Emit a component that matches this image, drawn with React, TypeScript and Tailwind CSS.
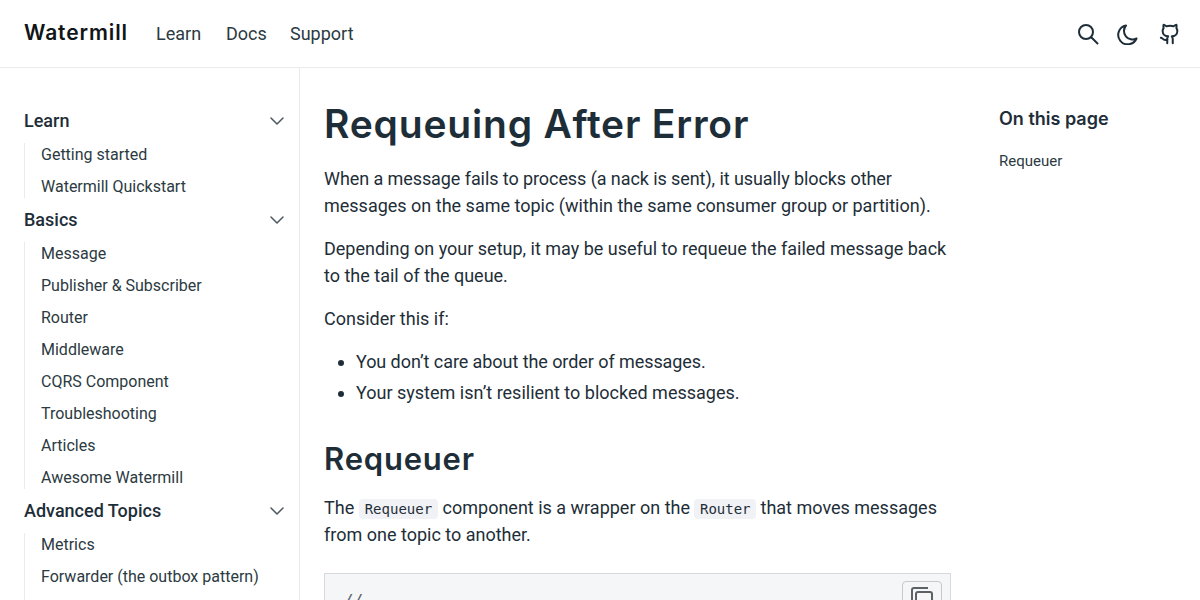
const groups = [
  { title: "Learn", items: ["Getting started", "Watermill Quickstart"] },
  { title: "Basics", items: ["Message", "Publisher & Subscriber", "Router", "Middleware", "CQRS Component", "Troubleshooting", "Articles", "Awesome Watermill"] },
  { title: "Advanced Topics", items: ["Metrics", "Forwarder (the outbox pattern)", ""] },
];

function Chevron() {
  return (
    <svg width="14" height="14" viewBox="0 0 14 14" fill="none" stroke="#4a5860" strokeWidth="1.5" strokeLinecap="round" strokeLinejoin="round">
      <path d="M1 5 7 11 13 5" />
    </svg>
  );
}

export default function App() {
  return (
    <div className="h-screen overflow-hidden bg-white font-['Roboto',sans-serif] text-[#1e2e38]">
      <header className="flex h-[68px] items-center justify-between border-b border-[#e9ebed] pb-px pl-6 pr-[19px]">
        <div className="flex items-center">
          <span className="w-[132px] font-['Inter',sans-serif] text-[21px] font-semibold tracking-[0.9px] text-[#101518]">Watermill</span>
          <nav className="flex gap-6 text-[18px] text-[#2c3a42]">
            <span className="w-[46px]">Learn</span>
            <span className="w-[40px]">Docs</span>
            <span>Support</span>
          </nav>
        </div>
        <div className="flex items-center text-[#1e2e38]">
          <svg width="24" height="24" viewBox="0 0 24 24" fill="none" stroke="currentColor" strokeWidth="2" strokeLinecap="round" strokeLinejoin="round">
            <circle cx="10" cy="11" r="7" />
            <path d="m15.500 16.500 6 6" />
          </svg>
          <svg className="ml-[15px]" width="24" height="24" viewBox="0 0 24 24" fill="none" stroke="currentColor" strokeWidth="2" strokeLinecap="round" strokeLinejoin="round">
            <path d="M11 4.500a9.500 9.500 0 1 0 10.500 13 8.500 8.500 0 0 1-10.500-13Z" />
          </svg>
          <svg className="ml-[20px] mt-[2px]" width="22" height="22" viewBox="0 0 24 24" fill="none" stroke="currentColor" strokeWidth="2.200" strokeLinecap="round" strokeLinejoin="round">
            <path d="M15 22v-4a4.800 4.800 0 0 0-1-3.500c3 0 6-2 6-5.500.08-1.250-.27-2.480-1-3.500.28-1.150.28-2.350 0-3.500 0 0-1 0-3 1.500-2.640-.5-5.360-.5-8 0C6 2 5 2 5 2c-.3 1.150-.3 2.350 0 3.500A5.400 5.400 0 0 0 4 9c0 3.500 3 5.500 6 5.500-.39.49-.68 1.050-.85 1.650-.17.6-.22 1.230-.15 1.850v4" />
            <path d="M9 18c-4.510 2-5-2-7-2" />
          </svg>
        </div>
      </header>

      <div className="flex">
        <aside className="h-[532px] w-[300px] shrink-0 overflow-hidden border-r border-[#e9ebed] pl-6 pr-[15px] pt-[35px]">
          {groups.map((g) => (
            <div key={g.title}>
              <div className="flex h-[34px] items-center justify-between text-[18px] font-medium text-[#1e2e38]">
                <span>{g.title}</span>
                <Chevron />
              </div>
              <ul className="mb-[4px] mt-[6px] flex flex-col border-l border-[#e9ebed] pl-4">
                {g.items.map((it, i) => (
                  <li key={i} className="flex h-8 shrink-0 items-center pt-[2px] text-[16px] text-[#2c3a42] first:-mt-[5px] last:-mb-[4px]">{it}</li>
                ))}
              </ul>
            </div>
          ))}
        </aside>

        <main className="w-[651px] shrink-0 pl-6 text-[18px] leading-[27px]">
          <h1 className="mt-[29px] font-['Inter',sans-serif] text-[39px] font-semibold leading-[54px] tracking-[0.8px] text-[#1e2e38]">Requeuing After Error</h1>
          <p className="mt-[14px]"><span className="tracking-[-0.08px]">When a message fails to process (a nack is sent), it usually blocks other</span> messages on the same topic (within the same consumer group or partition).</p>
          <p className="mt-4">Depending on your setup, it may be useful to requeue the failed message back to the tail of the queue.</p>
          <p className="mt-4">Consider this if:</p>
          <ul className="mt-4 list-disc pl-8">
            <li className="tracking-[-0.07px]">You don’t care about the order of messages.</li>
            <li className="mt-1">Your system isn’t resilient to blocked messages.</li>
          </ul>
          <h2 className="mt-[31px] font-['Inter',sans-serif] text-[31px] font-semibold leading-[44px] tracking-[0.8px] text-[#1e2e38]">Requeuer</h2>
          <p className="mt-[13px]">
            The <code className="rounded-sm bg-[#f1f2f5] px-[6px] py-0.5 font-['DejaVu_Sans_Mono',monospace] text-[14px] leading-none">Requeuer</code> component is a wrapper on the <code className="rounded-sm bg-[#f1f2f5] px-[5.500px] py-0.5 font-['DejaVu_Sans_Mono',monospace] text-[14px] leading-none">Router</code> that moves messages from one topic to another.
          </p>
          <div className="relative mt-[25px] h-[200px] border border-[#d8d9de] bg-[#f5f6f8] pl-[19px] pt-[13px] font-['DejaVu_Sans_Mono',monospace] text-[16px] italic text-[#55606a]">
            //
            <div className="absolute right-[8px] top-[7px] flex h-[40px] w-[40px] items-start justify-center rounded border border-[#c6c8cd] pt-[4px] not-italic">
              <svg width="24" height="24" viewBox="0 0 24 24" fill="none" stroke="#5c6166" strokeWidth="2" strokeLinejoin="round">
                <rect x="6" y="6" width="16" height="16" rx="2" />
                <path d="M2 18V4a2 2 0 0 1 2-2h14" />
              </svg>
            </div>
          </div>
        </main>

        <aside className="pl-12 pt-[38px]">
          <div className="font-['Inter',sans-serif] text-[18px] font-semibold leading-[26px] text-[#1e2e38]">On this page</div>
          <div className="mt-[18px] text-[15px] leading-[22px] text-[#2c3a42]">Requeuer</div>
        </aside>
      </div>
    </div>
  );
}
